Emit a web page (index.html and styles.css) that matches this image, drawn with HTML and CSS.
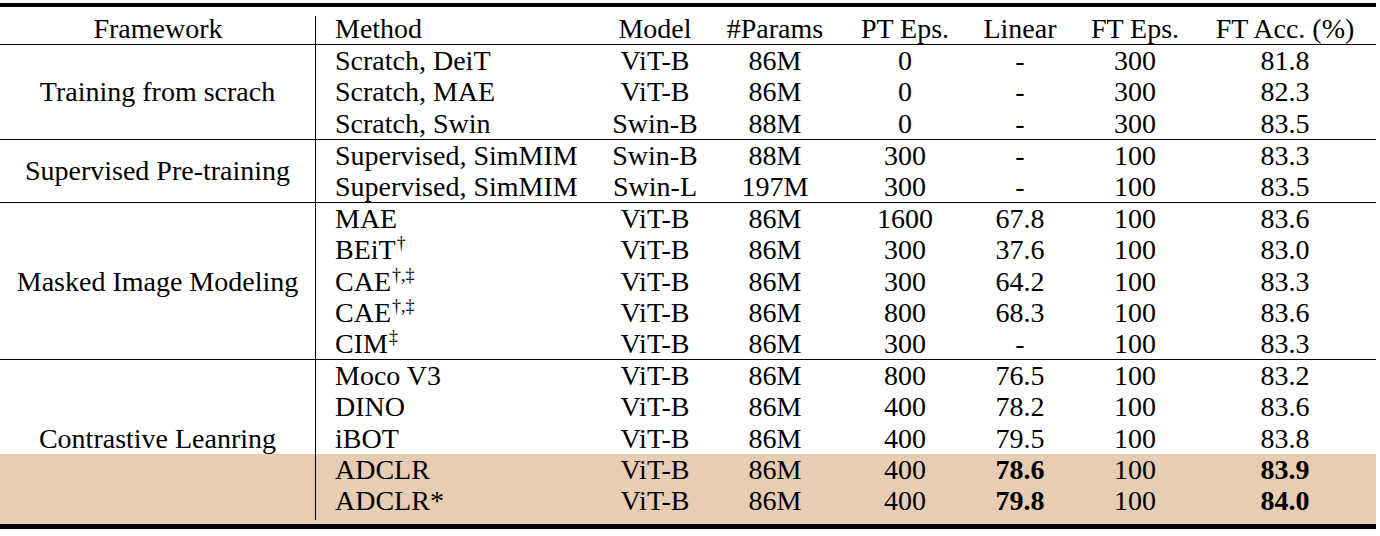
FILE: index.html
```html
<!DOCTYPE html>
<html lang="en">
<head>
<meta charset="utf-8">
<title>Results</title>
<link rel="stylesheet" href="styles.css">
</head>
<body>
<div class="page">
<table class="results">
<colgroup>
<col class="c-fw"><col class="c-method"><col class="c-model"><col class="c-params"><col class="c-pt"><col class="c-lin"><col class="c-ft"><col class="c-acc">
</colgroup>
<thead>
<tr>
<th class="fw">Framework</th><th class="method">Method</th><th>Model</th><th>#Params</th><th>PT Eps.</th><th>Linear</th><th>FT Eps.</th><th class="acc">FT Acc. (%)</th>
</tr>
</thead>
<tbody class="grp first">
<tr><td class="fw" rowspan="3">Training from scrach</td><td class="method">Scratch, DeiT</td><td>ViT-B</td><td>86M</td><td>0</td><td>-</td><td>300</td><td class="acc">81.8</td></tr>
<tr><td class="method">Scratch, MAE</td><td>ViT-B</td><td>86M</td><td>0</td><td>-</td><td>300</td><td class="acc">82.3</td></tr>
<tr><td class="method">Scratch, Swin</td><td>Swin-B</td><td>88M</td><td>0</td><td>-</td><td>300</td><td class="acc">83.5</td></tr>
</tbody>
<tbody class="grp">
<tr><td class="fw" rowspan="2">Supervised Pre-training</td><td class="method">Supervised, SimMIM</td><td>Swin-B</td><td>88M</td><td>300</td><td>-</td><td>100</td><td class="acc">83.3</td></tr>
<tr><td class="method">Supervised, SimMIM</td><td>Swin-L</td><td>197M</td><td>300</td><td>-</td><td>100</td><td class="acc">83.5</td></tr>
</tbody>
<tbody class="grp">
<tr><td class="fw" rowspan="5">Masked Image Modeling</td><td class="method">MAE</td><td>ViT-B</td><td>86M</td><td>1600</td><td>67.8</td><td>100</td><td class="acc">83.6</td></tr>
<tr><td class="method">BEiT<sup class="mark">†</sup></td><td>ViT-B</td><td>86M</td><td>300</td><td>37.6</td><td>100</td><td class="acc">83.0</td></tr>
<tr><td class="method">CAE<sup class="mark">†,‡</sup></td><td>ViT-B</td><td>86M</td><td>300</td><td>64.2</td><td>100</td><td class="acc">83.3</td></tr>
<tr><td class="method">CAE<sup class="mark">†,‡</sup></td><td>ViT-B</td><td>86M</td><td>800</td><td>68.3</td><td>100</td><td class="acc">83.6</td></tr>
<tr><td class="method">CIM<sup class="mark">‡</sup></td><td>ViT-B</td><td>86M</td><td>300</td><td>-</td><td>100</td><td class="acc">83.3</td></tr>
</tbody>
<tbody class="grp">
<tr><td class="fw low" rowspan="3">Contrastive Leanring</td><td class="method">Moco V3</td><td>ViT-B</td><td>86M</td><td>800</td><td>76.5</td><td>100</td><td class="acc">83.2</td></tr>
<tr><td class="method">DINO</td><td>ViT-B</td><td>86M</td><td>400</td><td>78.2</td><td>100</td><td class="acc">83.6</td></tr>
<tr><td class="method">iBOT</td><td>ViT-B</td><td>86M</td><td>400</td><td>79.5</td><td>100</td><td class="acc">83.8</td></tr>
<tr class="ours"><td class="fw"></td><td class="method">ADCLR</td><td>ViT-B</td><td>86M</td><td>400</td><td><b>78.6</b></td><td>100</td><td class="acc"><b>83.9</b></td></tr>
<tr class="ours last"><td class="fw end"></td><td class="method">ADCLR*</td><td>ViT-B</td><td>86M</td><td>400</td><td><b>79.8</b></td><td>100</td><td class="acc"><b>84.0</b></td></tr>
</tbody>
</table>
</div>
</body>
</html>
```

FILE: styles.css
```css
html, body {
  margin: 0;
  padding: 0;
  background: #fff;
}

.page {
  padding-top: 3px;
  width: 1376px;
}

.results {
  width: 1376px;
  table-layout: fixed;
  border-collapse: separate;
  border-spacing: 0;
  border-top: 4px solid #000;
  border-bottom: 5px solid #000;
  font-family: "Liberation Serif", "Times New Roman", serif;
  font-size: 28px;
  color: #000;
}

.c-fw { width: 316px; }
.c-method { width: 282px; }
.c-model { width: 114px; }
.c-params { width: 126px; }
.c-pt { width: 134px; }
.c-lin { width: 96px; }
.c-ft { width: 134px; }
.c-acc { width: 174px; }

.results th,
.results td {
  padding: 0;
  height: 31.2px;
  line-height: 31.2px;
  text-align: center;
  white-space: nowrap;
  font-weight: normal;
}

.results th {
  padding-top: 6px;
  border-bottom: 1px solid #000;
}

.results th.fw {
  background: linear-gradient(#000, #000) right bottom / 1px calc(100% - 9px) no-repeat;
}

.results td.fw {
  border-right: 1px solid #000;
}

.results .method {
  text-align: left;
  padding-left: 19px;
}

.results .acc {
  padding-right: 8px;
}

.grp + .grp tr:first-child td {
  border-top: 1px solid #000;
}

.results td.low {
  vertical-align: bottom;
}

.results b {
  font-weight: bold;
}

.mark {
  font-size: 18px;
  line-height: 0;
  vertical-align: 10px;
  margin-left: 1px;
}

.ours td {
  background: #e6cdb4;
}

.last td {
  height: 31.2px;
  padding-bottom: 8px;
  vertical-align: top;
}

.results td.end {
  border-right: 0;
  background: linear-gradient(#000, #000) right top / 1px calc(100% - 4px) no-repeat, #e6cdb4;
}
```
